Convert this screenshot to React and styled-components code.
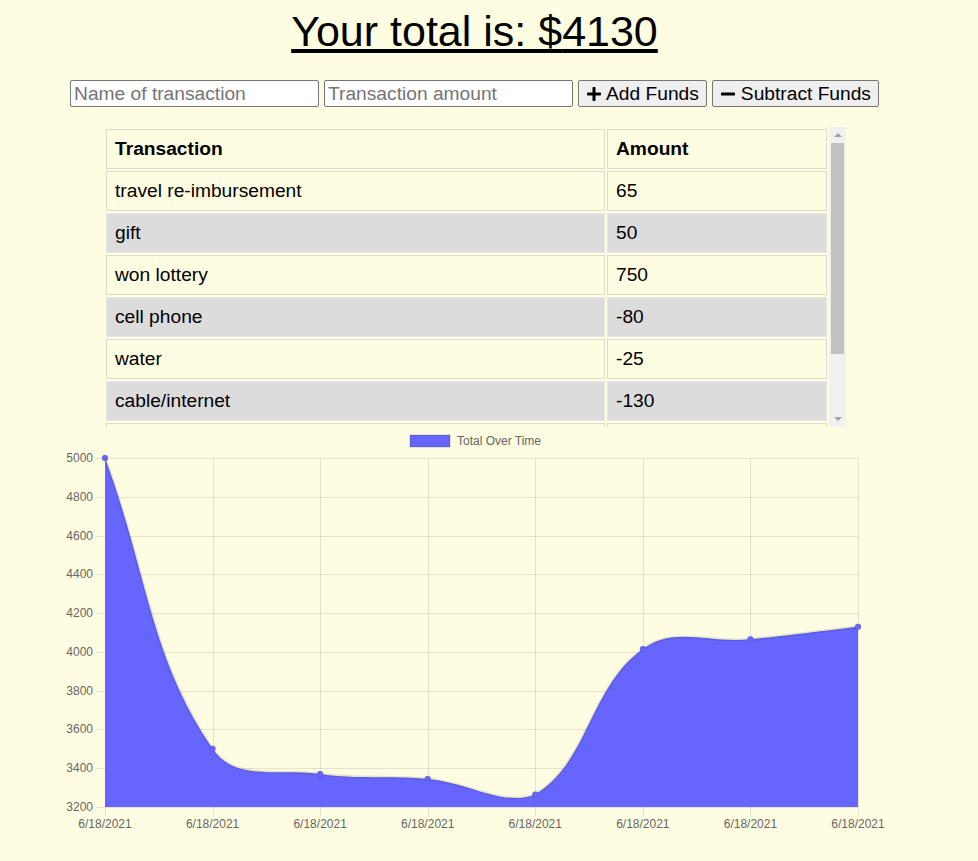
import React from 'react';
import styled, { createGlobalStyle } from 'styled-components';
import { FaPlus, FaMinus } from 'react-icons/fa';

const GlobalStyle = createGlobalStyle`
  html, body {
    margin: 0;
    padding: 0;
    background: #fffde1;
    font-family: "Liberation Sans", Arial, sans-serif;
    color: #000;
  }
`;

const Page = styled.div`
  width: 949px;
  padding-top: 7px;
`;

const Title = styled.h1`
  margin: 0;
  font-size: 43px;
  font-weight: normal;
  line-height: normal;
  text-align: center;
  text-decoration: underline;
`;

const Form = styled.form`
  display: flex;
  justify-content: center;
  gap: 5px;
  margin-top: 24px;
`;

const Input = styled.input`
  box-sizing: border-box;
  width: 249px;
  height: 27px;
  padding: 0 3px;
  border: 1px solid #767676;
  border-radius: 2px;
  background: #fff;
  font-family: inherit;
  font-size: 19.2px;
  &::placeholder {
    color: #757575;
  }
`;

const Button = styled.button`
  box-sizing: border-box;
  height: 27px;
  display: flex;
  align-items: center;
  gap: ${(p) => p.$gap || 4}px;
  padding: 0 7px;
  border: 1px solid #767676;
  border-radius: 2px;
  background: #efefef;
  color: #000;
  font-family: inherit;
  font-size: 19.2px;
`;

const TableFrame = styled.div`
  display: flex;
  width: 742px;
  height: 300px;
  margin: 20px 0 0 104px;
`;

const TableWindow = styled.div`
  width: 725px;
  height: 300px;
  overflow: hidden;
`;

const Table = styled.table`
  width: 725px;
  table-layout: fixed;
  border-collapse: separate;
  border-spacing: 2px;
  font-size: 19.2px;

  th, td {
    box-sizing: border-box;
    height: 40px;
    padding: 0 8px;
    border: 1px solid #dedbc8;
    text-align: left;
    vertical-align: middle;
  }
  th {
    font-weight: bold;
  }
  th:first-child {
    width: 499px;
  }
  tbody tr:nth-child(even) td {
    background: #dcdcdc;
    border-color: #e6e6e6;
  }
`;

const Scrollbar = styled.div`
  width: 17px;
  display: flex;
  flex-direction: column;
  background: #f1f1f1;
`;

const ScrollButton = styled.div`
  height: 16px;
  display: flex;
  align-items: center;
  justify-content: center;
  &::after {
    content: '';
    border-left: 4px solid transparent;
    border-right: 4px solid transparent;
    ${(p) => (p.$down ? 'border-top' : 'border-bottom')}: 4px solid #a3a3a3;
  }
`;

const Thumb = styled.div`
  height: 211px;
  margin: 0 2px;
  background: #c1c1c1;
`;

const Track = styled.div`
  flex: 1;
`;

const Chart = styled.svg`
  display: block;
  font-family: "Liberation Sans", Arial, sans-serif;
`;

const transactions = [
  { name: 'travel re-imbursement', value: 65 },
  { name: 'gift', value: 50 },
  { name: 'won lottery', value: 750 },
  { name: 'cell phone', value: -80 },
  { name: 'water', value: -25 },
  { name: 'cable/internet', value: -130 },
  { name: 'rent', value: -1500 },
  { name: 'paycheck', value: 5000 },
];

// chart area in page coordinates
const area = { left: 105, right: 858, top: 459, bottom: 808, min: 3200, max: 5000 };

const buildTotals = () => {
  const list = [...transactions].reverse();
  let sum = 0;
  return list.map((t) => (sum += t.value));
};

const toPoints = (totals) =>
  totals.map((v, i) => ({
    x: area.left + (i * (area.right - area.left)) / (totals.length - 1),
    y: area.bottom - ((v - area.min) / (area.max - area.min)) * (area.bottom - area.top),
  }));

const clamp = (v, a, b) => Math.max(a, Math.min(b, v));

// same spline as chart.js (tension 0.4)
const splinePath = (pts) => {
  const t = 0.4;
  const cps = pts.map((cur, i) => {
    const prev = pts[i - 1] || cur;
    const next = pts[i + 1] || cur;
    const d01 = Math.hypot(cur.x - prev.x, cur.y - prev.y);
    const d12 = Math.hypot(next.x - cur.x, next.y - cur.y);
    let s01 = d01 / (d01 + d12);
    let s12 = d12 / (d01 + d12);
    s01 = isNaN(s01) ? 0 : s01;
    s12 = isNaN(s12) ? 0 : s12;
    const fa = t * s01;
    const fb = t * s12;
    const cap = (p) => ({
      x: clamp(p.x, area.left, area.right),
      y: clamp(p.y, area.top, area.bottom),
    });
    return {
      prev: cap({ x: cur.x - fa * (next.x - prev.x), y: cur.y - fa * (next.y - prev.y) }),
      next: cap({ x: cur.x + fb * (next.x - prev.x), y: cur.y + fb * (next.y - prev.y) }),
    };
  });
  let d = `M${pts[0].x},${pts[0].y}`;
  for (let i = 1; i < pts.length; i++) {
    const a = cps[i - 1].next;
    const b = cps[i].prev;
    d += ` C${a.x},${a.y} ${b.x},${b.y} ${pts[i].x},${pts[i].y}`;
  }
  return d;
};

const TotalChart = () => {
  const totals = buildTotals();
  const pts = toPoints(totals);
  const line = splinePath(pts);
  const fill = `${line} L${area.right},${area.bottom} L${area.left},${area.bottom} Z`;
  const ticks = [];
  for (let v = area.min; v <= area.max; v += 200) ticks.push(v);
  const yOf = (v) => area.bottom - ((v - area.min) / (area.max - area.min)) * (area.bottom - area.top);
  const grid = 'rgba(0,0,0,0.1)';

  return (
    <Chart width="949" height="433" viewBox="0 428 949 433">
      <rect x="410" y="436" width="40" height="12" fill="#6666ff" stroke={grid} strokeWidth="2" />
      <text x="457" y="442" fontSize="12" fill="#666" dominantBaseline="central">
        Total Over Time
      </text>

      {ticks.map((v) => (
        <g key={v}>
          <line x1="96" x2={area.right} y1={Math.round(yOf(v)) + 0.5} y2={Math.round(yOf(v)) + 0.5} stroke={grid} />
          <text x="93" y={yOf(v)} fontSize="12" fill="#666" textAnchor="end" dominantBaseline="central">
            {v}
          </text>
        </g>
      ))}
      {pts.map((p, i) => (
        <g key={i}>
          <line x1={Math.round(p.x) + 0.5} x2={Math.round(p.x) + 0.5} y1={area.top} y2="817" stroke={grid} />
          <text x={p.x} y="825" fontSize="12" fill="#666" textAnchor="middle" dominantBaseline="central">
            6/18/2021
          </text>
        </g>
      ))}

      <path d={fill} fill="#6666ff" />
      <path d={line} fill="none" stroke={grid} strokeWidth="3" />
      {pts.map((p, i) => (
        <circle key={i} cx={p.x} cy={p.y} r="3" fill="#6666ff" stroke={grid} strokeWidth="1" />
      ))}
    </Chart>
  );
};

const App = () => {
  const total = transactions.reduce((s, t) => s + t.value, 0);

  return (
    <Page>
      <GlobalStyle />
      <Title>Your total is: ${total}</Title>

      <Form onSubmit={(e) => e.preventDefault()}>
        <Input type="text" placeholder="Name of transaction" />
        <Input type="number" placeholder="Transaction amount" />
        <Button type="button">
          <FaPlus size={16} />
          Add Funds
        </Button>
        <Button type="button" $gap={5}>
          <FaMinus size={16} />
          Subtract Funds
        </Button>
      </Form>

      <TableFrame>
        <TableWindow>
          <Table>
            <thead>
              <tr>
                <th>Transaction</th>
                <th>Amount</th>
              </tr>
            </thead>
            <tbody>
              {transactions.map((t) => (
                <tr key={t.name}>
                  <td>{t.name}</td>
                  <td>{t.value}</td>
                </tr>
              ))}
            </tbody>
          </Table>
        </TableWindow>
        <Scrollbar>
          <ScrollButton />
          <Thumb />
          <Track />
          <ScrollButton $down />
        </Scrollbar>
      </TableFrame>

      <TotalChart />
    </Page>
  );
};

export default App;
